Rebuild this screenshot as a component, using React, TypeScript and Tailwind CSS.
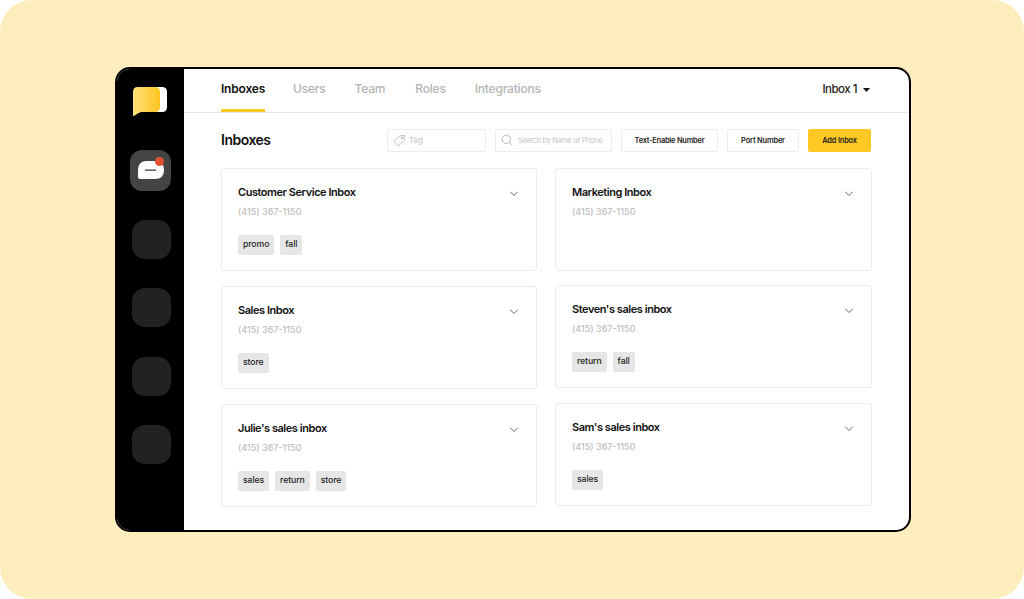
import React from "react";

const Chevron = () => (
  <svg width="10" height="6" viewBox="0 0 10 6" fill="none" className="mt-[3px] mr-[9px] shrink-0">
    <path d="M1.5 1 L5 4.5 L8.5 1" stroke="#666" strokeWidth="1" strokeLinecap="round" strokeLinejoin="round" />
  </svg>
);

function Card({ title, tags, mt = "" }: { title: string; tags: string[]; mt?: string }) {
  return (
    <div className={`h-[103px] border border-[#ececec] rounded-[3px] pl-4 pr-2 pt-[15px] bg-white ${mt}`}>
      <div className="flex items-center justify-between h-4">
        <span className="text-[11px] font-semibold text-[#111] tracking-[-0.45px]">{title}</span>
        <Chevron />
      </div>
      <div className="mt-[4px] h-4 leading-4 text-[9px] font-medium text-[#bdbdbd]">(415) 367-1150</div>
      {tags.length > 0 && (
        <div className="flex gap-[6px] mt-[15px]">
          {tags.map((t) => (
            <span key={t} className="h-5 px-[5px] flex items-center rounded-[2px] bg-[#e6e6e6] text-[8.7px] tracking-[-0.1px] font-medium text-[#222]">
              {t}
            </span>
          ))}
        </div>
      )}
    </div>
  );
}

const Tile = ({ mt }: { mt: string }) => <div className={`w-[39px] h-[39px] ml-[2px] rounded-[13px] bg-[#222222] ${mt}`} />;

export default function App() {
  return (
    <div className="w-[1024px] h-[599px] bg-white overflow-hidden" style={{ fontFamily: "Inter, sans-serif" }}>
      <div className="w-full h-full rounded-[32px] bg-[#feeebd] pl-[115px] pt-[67px]">
        <div className="w-[796px] h-[465px] rounded-[15px] border-2 border-black bg-white overflow-hidden flex">
          <aside className="w-[67px] shrink-0 bg-black flex flex-col items-center pt-[18px]">
            <svg width="34" height="30" viewBox="0 0 34 30" className="-ml-[1px]">
              <defs>
                <linearGradient id="g" x1="0" x2="1" y1="0" y2="0">
                  <stop offset="0" stopColor="#fee27a" />
                  <stop offset="1" stopColor="#fec41f" />
                </linearGradient>
              </defs>
              <path d="M12 0 H29 Q34 0 34 5 V20 Q34 25 29 25 H20 Z" fill="#ffffff" />
              <path d="M5 0 H22 Q27 0 27 5 V20 Q27 25 22 25 H8 Q5 26 1 29 Q0 29.5 0 28 V5 Q0 0 5 0 Z" fill="url(#g)" />
            </svg>
            <div className="relative w-[41px] h-[41px] mt-[33px] rounded-[12px] bg-[#444444] flex items-center justify-center">
              <svg width="26" height="19" viewBox="0 0 26 19">
                <path d="M9 0 H17 Q26 0 26 9 Q26 18 17 18 H2 Q0 18 0 16 V9 Q0 0 9 0 Z" fill="#fff" />
                <rect x="7" y="8.5" width="11" height="1.3" fill="#444" />
              </svg>
              <span className="absolute right-[7px] top-[7px] w-[9px] h-[9px] rounded-full bg-[#e2502f]" />
            </div>
            <Tile mt="mt-[29px]" />
            <Tile mt="mt-[29px]" />
            <Tile mt="mt-[30px]" />
            <Tile mt="mt-[29px]" />
          </aside>
          <main className="flex-1 min-w-0 flex flex-col">
            <header className="h-[44px] shrink-0 border-b border-[#e8e8e8] flex pl-[37px] pr-[39px] items-start">
              <nav className="flex gap-7 text-[12px] tracking-[-0.2px] font-medium text-[#b4b4b4]">
                <span className="relative h-[43px] pt-[12px] leading-4 text-[#111] font-semibold">
                  Inboxes
                  <span className="absolute left-0 right-0 bottom-0 h-[3px] bg-[#ffc824]" />
                </span>
                <span className="pt-[12px] leading-4">Users</span>
                <span className="pt-[12px] leading-4 ml-[1px]">Team</span>
                <span className="pt-[12px] leading-4 ml-[2px]">Roles</span>
                <span className="pt-[12px] leading-4 ml-[1px]">Integrations</span>
              </nav>
              <div className="ml-auto flex items-center gap-[6px] pt-[12px] leading-4 text-[11.5px] tracking-[-0.5px] font-medium text-[#222]">
                Inbox 1
                <svg width="7" height="4" viewBox="0 0 7 4" className="mt-[1px]"><path d="M0 0 H7 L3.5 4 Z" fill="#111" /></svg>
              </div>
            </header>
            <div className="pl-[37px] pt-[15px]">
              <div className="flex items-center h-[24px] w-[650px]">
                <h1 className="text-[14px] font-semibold text-[#111] tracking-[-0.5px] -mt-[2px]">Inboxes</h1>
                <div className="ml-auto w-[99px] h-[23px] border border-[#ececec] rounded-[2px] flex items-center pl-[5px] gap-[2px] text-[8px] text-[#c4c4c4]">
                  <svg width="13" height="13" viewBox="0 0 13 13" fill="none" stroke="#aaa" strokeWidth="0.8">
                    <path d="M1 7.5 L6.5 2 L11.5 1.5 L11 6.5 L5.5 12 Z" strokeLinejoin="round" />
                    <circle cx="9" cy="4" r="0.8" />
                  </svg>
                  <span className="ml-[1px]">Tag</span>
                </div>
                <div className="ml-[9px] w-[117px] h-[23px] border border-[#ececec] rounded-[2px] flex items-center pl-[5px] gap-[5px] text-[7.4px] tracking-[-0.3px] text-[#c4c4c4] whitespace-nowrap">
                  <svg width="12" height="12" viewBox="0 0 12 12" fill="none" stroke="#aaa" strokeWidth="0.8">
                    <circle cx="5.3" cy="5.3" r="4.2" />
                    <path d="M8.4 8.4 L11 11" strokeLinecap="round" />
                  </svg>
                  <span className="pt-px">Search by Name or Phone</span>
                </div>
                <div className="ml-[9px] w-[97px] h-[23px] border border-[#ececec] rounded-[2px] flex items-center justify-center pt-px text-[7.4px] tracking-[-0.2px] font-semibold text-[#222]">Text-Enable Number</div>
                <div className="ml-[9px] w-[72px] h-[23px] border border-[#ececec] rounded-[2px] flex items-center justify-center pt-px text-[7.4px] tracking-[-0.15px] font-semibold text-[#222]">Port Number</div>
                <div className="ml-[9px] w-[63px] h-[23px] bg-[#ffc824] rounded-[2px] flex items-center justify-center pt-px text-[7.4px] tracking-[-0.15px] font-semibold text-[#222]">Add Inbox</div>
              </div>
              <div className="grid grid-cols-[316px_317px] gap-x-[18px] mt-[16px]">
                <div className="flex flex-col gap-[15px]">
                  <Card title="Customer Service Inbox" tags={["promo", "fall"]} />
                  <Card title="Sales Inbox" tags={["store"]} />
                  <Card title="Julie's sales inbox" tags={["sales", "return", "store"]} />
                </div>
                <div className="flex flex-col gap-[15px]">
                  <Card title="Marketing Inbox" tags={[]} />
                  <Card title="Steven's sales inbox" tags={["return", "fall"]} mt="-mt-px" />
                  <Card title="Sam's sales inbox" tags={["sales"]} />
                </div>
              </div>
            </div>
          </main>
        </div>
      </div>
    </div>
  );
}
